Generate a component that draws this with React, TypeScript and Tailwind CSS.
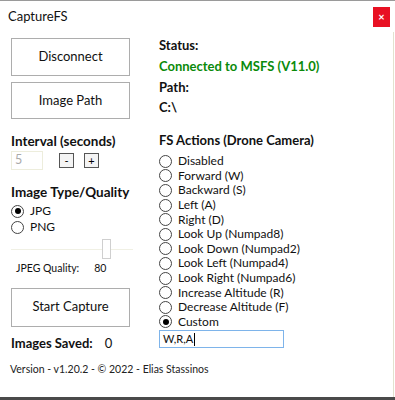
import React from "react";

const font = { fontFamily: 'Lato, "Noto Sans", sans-serif' };

function Radio({ label, checked }: { label: string; checked?: boolean }) {
  return (
    <div className="flex items-center h-[14.6px]">
      <span className="w-[13px] h-[13px] rounded-full border border-[#444] flex items-center justify-center shrink-0">
        {checked && <span className="w-[6px] h-[6px] rounded-full bg-black" />}
      </span>
      <span className="ml-[6px] text-[12px] leading-none text-[#111] whitespace-nowrap">{label}</span>
    </div>
  );
}

function Btn({ label, h }: { label: string; h: string }) {
  return (
    <div className={`w-[119px] ${h} border border-[#adadad] bg-white flex items-center justify-center text-[13px] text-[#111]`}>
      {label}
    </div>
  );
}

export default function App() {
  const actions = [
    "Disabled",
    "Forward (W)",
    "Backward (S)",
    "Left (A)",
    "Right (D)",
    "Look Up (Numpad8)",
    "Look Down (Numpad2)",
    "Look Left (Numpad4)",
    "Look Right (Numpad6)",
    "Increase Altitude (R)",
    "Decrease Altitude (F)",
  ];
  return (
    <div style={font} className="w-[395px] h-[400px] bg-white flex flex-col border-t border-t-[#9a9a9a] border-b-[3px] border-b-[#4a4a4a] overflow-hidden">
      <div className="h-[31px] flex items-center justify-between pl-[8px] pr-[5px] shrink-0">
        <span className="text-[13px] text-[#111] mt-[1px]">CaptureFS</span>
        <div className="w-[17px] h-[20px] bg-[#e81123] flex items-center justify-center text-white text-[11px] font-bold leading-none">
          ×
        </div>
      </div>
      <div className="flex flex-1 border-r border-r-[#e2e2cf] mr-[1px]">
        {/* left column */}
        <div className="w-[148px] pl-[11px] flex flex-col shrink-0">
          <div className="mt-[6px]">
            <Btn label="Disconnect" h="h-[38px]" />
          </div>
          <div className="mt-[6px]">
            <Btn label="Image Path" h="h-[37px]" />
          </div>
          <div className="mt-[13px] h-[18px] flex items-center text-[13.5px] font-bold text-[#111] whitespace-nowrap">Interval (seconds)</div>
          <div className="mt-[1px] flex items-center h-[19px]">
            <div className="w-[32px] h-[19px] border border-[#ededdc] text-[12.5px] text-[#aaa] pl-[3px] flex items-center">5</div>
            <div className="ml-[16px] w-[15px] h-[15px] border border-[#555] bg-[#f4f4f4] flex items-center justify-center text-[11px] leading-none">-</div>
            <div className="ml-[10px] w-[15px] h-[15px] border border-[#555] bg-[#f4f4f4] flex items-center justify-center text-[11px] leading-none">+</div>
          </div>
          <div className="mt-[12px] h-[20px] flex items-center text-[13.5px] font-bold text-[#111] whitespace-nowrap">Image Type/Quality</div>
          <div className="mt-[2px] flex flex-col gap-[1.5px]">
            <Radio label="JPG" checked />
            <Radio label="PNG" />
          </div>
          <div className="mt-[4px] h-[20px] relative w-[122px]">
            <div className="absolute left-0 right-0 top-[10px] h-[1px] bg-[#f0f0e4]" />
            <div className="absolute left-[91px] top-0 w-[9px] h-[20px] border border-[#cfcfcf] bg-white" />
          </div>
          <div className="mt-[2px] h-[16px] flex items-center text-[10.5px] text-[#111] whitespace-nowrap">
            <span className="ml-[5px]">JPEG Quality:</span>
            <span className="ml-[15px]">80</span>
          </div>
          <div className="mt-[11px]">
            <Btn label="Start Capture" h="h-[39px]" />
          </div>
          <div className="mt-[8px] h-[18px] flex items-center text-[#111] whitespace-nowrap">
            <span className="text-[13px] font-bold">Images Saved:</span>
            <span className="ml-[12px] text-[13px]">0</span>
          </div>
        </div>
        {/* right column */}
        <div className="flex-1 pl-[11px] flex flex-col">
          <div className="mt-[4px] h-[20px] flex items-center text-[13px] font-bold text-[#111]">Status:</div>
          <div className="mt-[1px] h-[20px] flex items-center text-[13px] font-bold text-[#0a8a0a]">Connected to MSFS (V11.0)</div>
          <div className="mt-[1px] h-[20px] flex items-center text-[13px] font-bold text-[#111]">Path:</div>
          <div className="h-[20px] flex items-center text-[13px] font-bold text-[#111]">C:\</div>
          <div className="mt-[13px] h-[20px] flex items-center text-[13px] font-bold text-[#111]">FS Actions (Drone Camera)</div>
          <div className="mt-[3px] flex flex-col">
            {actions.map((a) => (
              <Radio key={a} label={a} />
            ))}
            <Radio label="Custom" checked />
          </div>
          <div className="mt-[1px] w-[125px] h-[18px] border border-[#7eb4ea] flex items-center pl-[3px] text-[11px] text-[#111]">
            W,R,A<span className="inline-block w-[1px] h-[13px] bg-black ml-[0.5px]" />
          </div>
          <div className="-ml-[149px] mt-[14px] h-[16px] flex items-center text-[10.5px] text-[#222] whitespace-nowrap">
            Version - v1.20.2 - © 2022 - Elias Stassinos
          </div>
        </div>
      </div>
    </div>
  );
}
